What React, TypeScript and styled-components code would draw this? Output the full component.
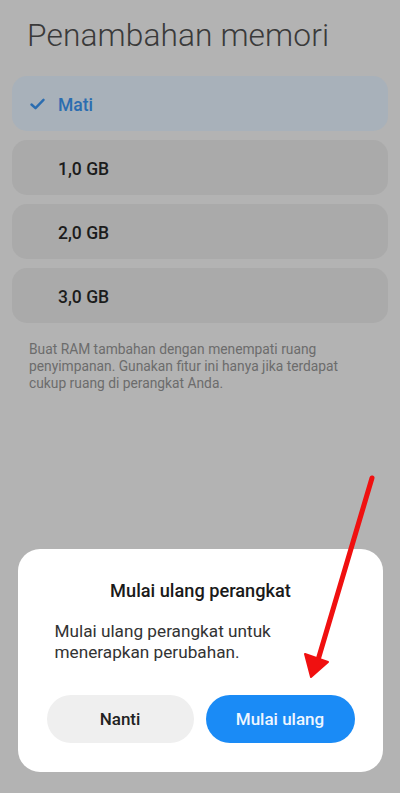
import React from "react";
import styled, { createGlobalStyle } from "styled-components";

const Global = createGlobalStyle`
  html, body {
    margin: 0;
    padding: 0;
    background: #b3b3b3;
  }
  body {
    font-family: Roboto, "Noto Sans", "Liberation Sans", sans-serif;
    -webkit-font-smoothing: antialiased;
  }
`;

const Screen = styled.div`
  width: 400px;
  height: 793px;
  background: #b3b3b3;
  display: flex;
  flex-direction: column;
  padding: 0 12px;
  box-sizing: border-box;
  overflow: hidden;
`;

const Title = styled.h1`
  margin: 17px 0 0 15px;
  font-size: 31.7px;
  font-weight: 300;
  line-height: 38px;
  color: #3a3a3a;
  letter-spacing: 0.1px;
`;

const OptionList = styled.div`
  display: flex;
  flex-direction: column;
  gap: 9px;
  margin-top: 21px;
`;

const Option = styled.div<{ $selected?: boolean }>`
  height: 55px;
  border-radius: 15px;
  background: ${(p) => (p.$selected ? "#a8b1ba" : "#aaaaaa")};
  display: flex;
  align-items: center;
  padding-left: 18px;
  gap: 13px;
`;

const CheckSlot = styled.span`
  width: 15px;
  height: 15px;
  display: flex;
  align-items: center;
  justify-content: center;
`;

const OptionLabel = styled.span<{ $selected?: boolean }>`
  font-size: 17.5px;
  font-weight: 500;
  margin-top: 2px;
  color: ${(p) => (p.$selected ? "#2b6db0" : "#1c1c1c")};
`;

const Note = styled.p`
  margin: 18px 0 0 17px;
  font-size: 13.8px;
  line-height: 17px;
  color: #6c6c6c;
  max-width: 318px;
`;

const Overlay = styled.div`
  position: fixed;
  inset: 0;
  display: flex;
  flex-direction: column;
  justify-content: flex-end;
  align-items: center;
  padding-bottom: 21px;
  pointer-events: none;
`;

const Dialog = styled.div`
  width: 365px;
  height: 223px;
  box-sizing: border-box;
  background: #ffffff;
  border-radius: 22px;
  padding: 31px 28px 0 29px;
  display: flex;
  flex-direction: column;
`;

const DialogTitle = styled.h2`
  margin: 0;
  text-align: center;
  font-size: 18.2px;
  font-weight: 500;
  line-height: 22px;
  color: #1a1a1a;
`;

const DialogBody = styled.p`
  margin: 19px 0 0 8px;
  font-size: 17.2px;
  line-height: 21px;
  color: #333333;
`;

const Actions = styled.div`
  display: grid;
  grid-template-columns: 147px 149px;
  gap: 12px;
  margin-top: 32px;
`;

const ActionButton = styled.button<{ $primary?: boolean }>`
  height: 48px;
  border: none;
  border-radius: 24px;
  font-family: inherit;
  font-size: 17px;
  font-weight: 500;
  background: ${(p) => (p.$primary ? "#1a8bf6" : "#efefef")};
  color: ${(p) => (p.$primary ? "#eef6ff" : "#222222")};
`;

const Pointer = styled.svg`
  position: fixed;
  left: 0;
  top: 0;
  pointer-events: none;
`;

const CheckIcon = () => (
  <svg width="15" height="12" viewBox="0 0 15 12">
    <path
      d="M1.5 6.5 L5.5 10.2 L13.5 1.8"
      fill="none"
      stroke="#2b6db0"
      strokeWidth="2.4"
      strokeLinecap="round"
      strokeLinejoin="round"
    />
  </svg>
);

const options = ["Mati", "1,0 GB", "2,0 GB", "3,0 GB"];

export default function App() {
  return (
    <>
      <Global />
      <Screen>
        <Title>Penambahan memori</Title>
        <OptionList>
          {options.map((o, i) => (
            <Option key={o} $selected={i === 0}>
              <CheckSlot>{i === 0 ? <CheckIcon /> : null}</CheckSlot>
              <OptionLabel $selected={i === 0}>{o}</OptionLabel>
            </Option>
          ))}
        </OptionList>
        <Note>
          Buat RAM tambahan dengan menempati ruang penyimpanan. Gunakan fitur
          ini hanya jika terdapat cukup ruang di perangkat Anda.
        </Note>
      </Screen>
      <Overlay>
        <Dialog>
          <DialogTitle>Mulai ulang perangkat</DialogTitle>
          <DialogBody>
            Mulai ulang perangkat untuk
            <br />
            menerapkan perubahan.
          </DialogBody>
          <Actions>
            <ActionButton>Nanti</ActionButton>
            <ActionButton $primary>Mulai ulang</ActionButton>
          </Actions>
        </Dialog>
      </Overlay>
      <Pointer width="400" height="793" viewBox="0 0 400 793">
        <line
          x1="372"
          y1="478"
          x2="318"
          y2="660"
          stroke="#f01010"
          strokeWidth="5"
          strokeLinecap="round"
        />
        <polygon
          points="305,654 328,662 311,677"
          fill="#f01010"
          stroke="#f01010"
          strokeWidth="2"
          strokeLinejoin="round"
        />
      </Pointer>
    </>
  );
}
